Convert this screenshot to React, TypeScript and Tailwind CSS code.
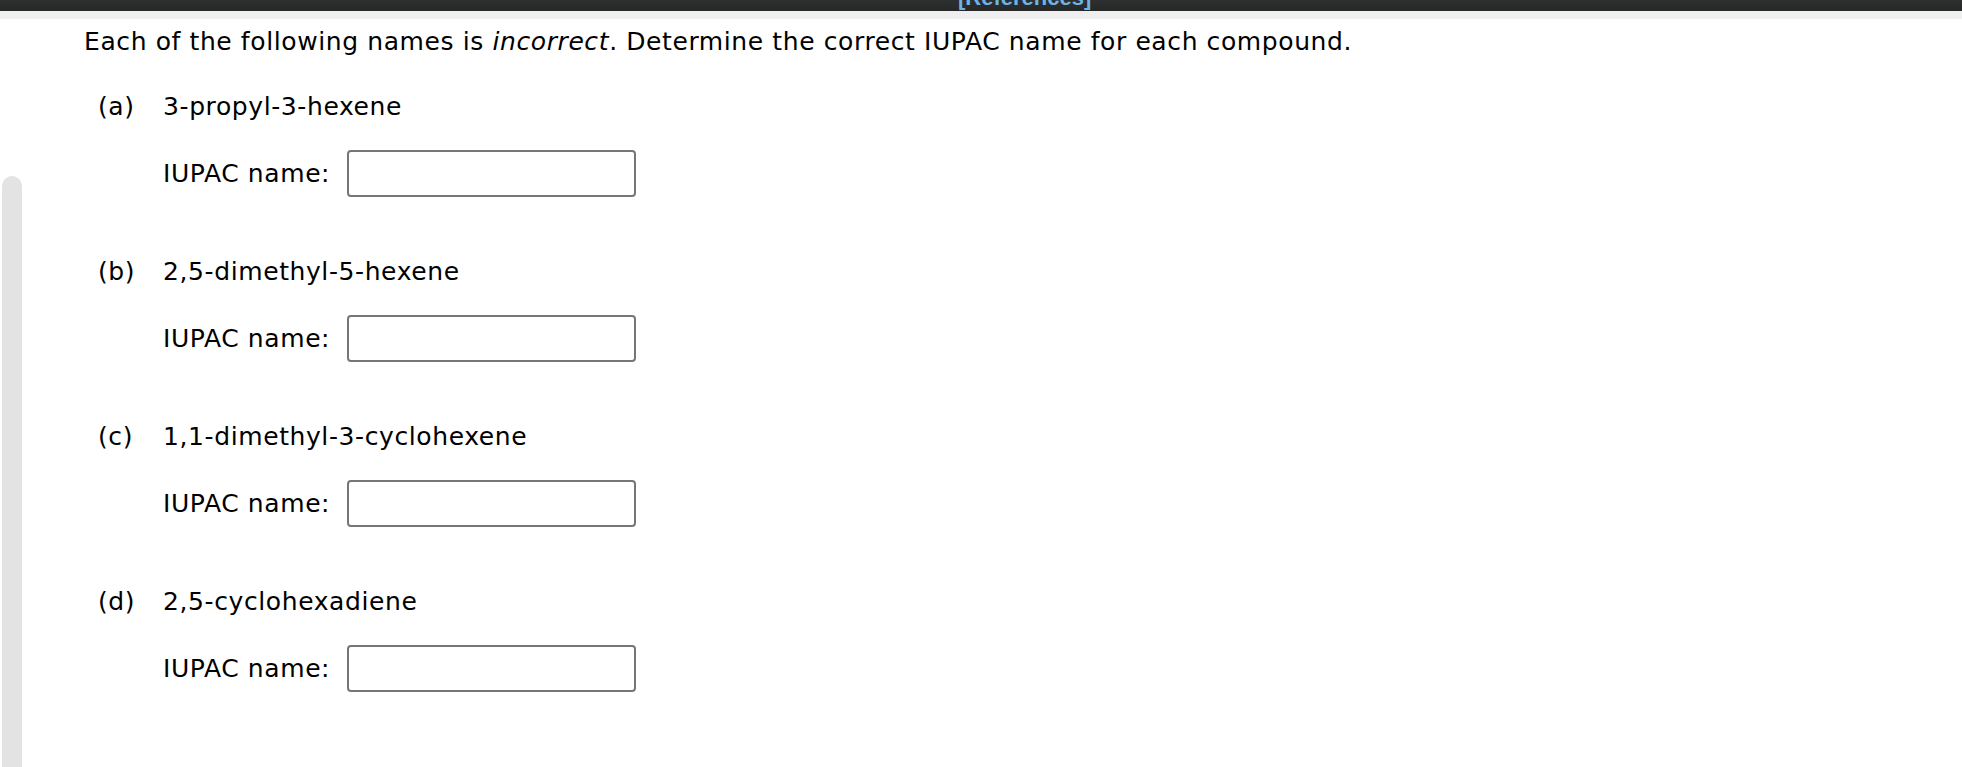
const items = [
  { label: "(a)", name: "3-propyl-3-hexene" },
  { label: "(b)", name: "2,5-dimethyl-5-hexene" },
  { label: "(c)", name: "1,1-dimethyl-3-cyclohexene" },
  { label: "(d)", name: "2,5-cyclohexadiene" },
];

export default function App() {
  return (
    <div
      className="w-[1962px] h-[767px] bg-white text-black overflow-hidden flex flex-col"
      style={{ fontFamily: '"DejaVu Sans", Verdana, sans-serif' }}
    >
      {/* top bar with cut-off references link */}
      <div className="h-[11px] shrink-0 bg-gradient-to-b from-[#2e2f2f] to-[#262727] overflow-hidden pl-[958px]">
        <span
          className="block mt-[-13px] text-[22px] leading-[22px] font-bold text-[#6cb4e6]"
          style={{ fontFamily: '"Liberation Sans", Arial, sans-serif' }}
        >
          [References]
        </span>
      </div>
      <div className="h-[8px] shrink-0 bg-[#efefef]" />

      <div className="flex flex-1">
        {/* left scroll track */}
        <div className="w-[24px] shrink-0 pl-[2px] pt-[157px]">
          <div className="w-[20px] h-full bg-[#e3e3e3] rounded-t-[10px]" />
        </div>

        <div className="pl-[60px] pt-[9px] text-[25px] leading-[28px] tracking-[0.6px]">
          <p>
            Each of the following names is <i>incorrect</i>. Determine the correct IUPAC name for each compound.
          </p>

          <div className="flex flex-col pl-[14px] pt-[37px]">
            {items.map((item) => (
              <div key={item.label} className="flex flex-col h-[165px]">
                <div className="flex">
                  <span className="w-[65px]">{item.label}</span>
                  <span>{item.name}</span>
                </div>
                <div className="flex items-start pl-[65px] mt-[29px]">
                  <span className="mt-[10px] mr-[17px]">IUPAC name:</span>
                  <input
                    type="text"
                    className="w-[289px] h-[47px] border-2 border-[#767676] rounded-[4px] bg-white outline-none"
                  />
                </div>
              </div>
            ))}
          </div>
        </div>
      </div>
    </div>
  );
}
